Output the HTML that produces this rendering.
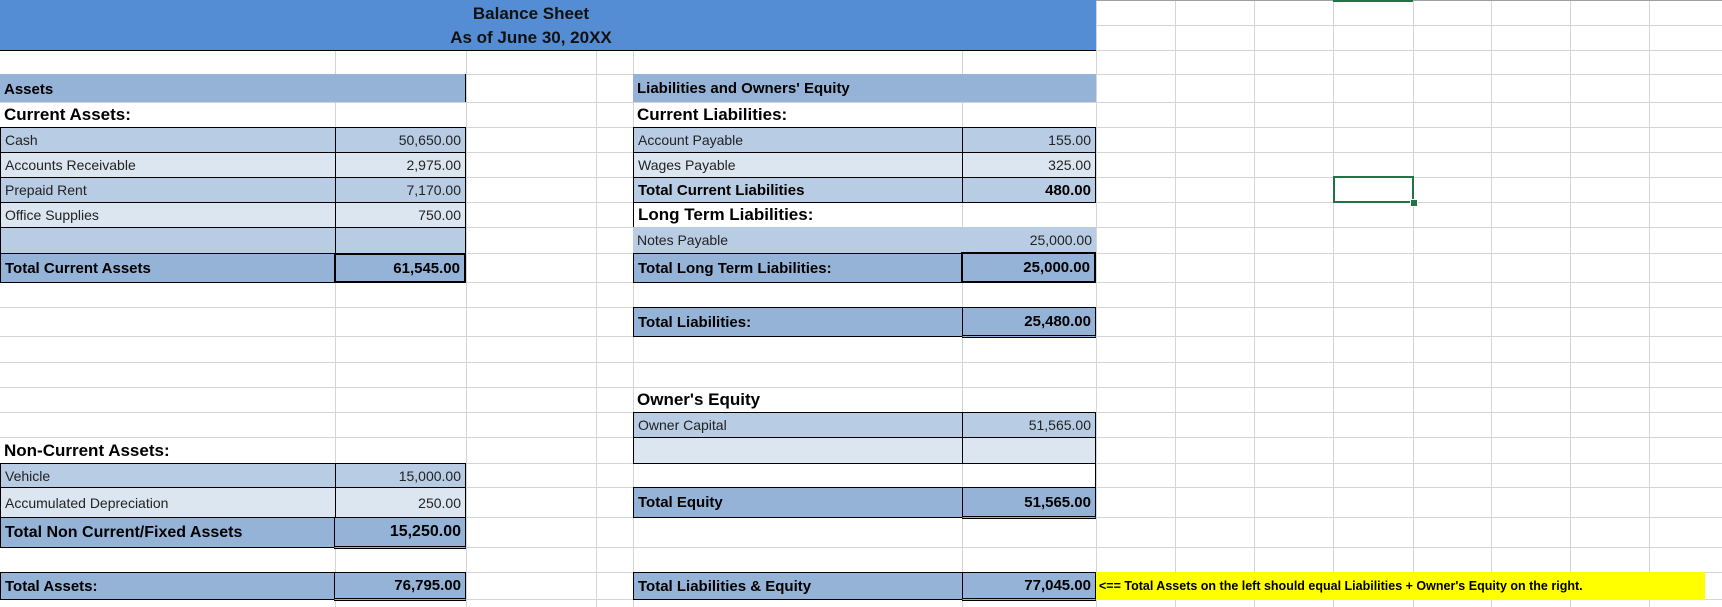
<!DOCTYPE html>
<html><head><meta charset="utf-8"><style>
body{margin:0;width:1722px;height:607px;overflow:hidden;background:#fff;position:relative;font-family:"Liberation Sans",Arial,sans-serif;}
.v{position:absolute;top:0;height:607px;width:1px;background:#d4d4d4}
.h{position:absolute;left:0;width:1722px;height:1px;background:#d4d4d4}
.c{position:absolute;box-sizing:border-box;display:flex;align-items:center;padding:0 4px;font-size:14px;color:#222;white-space:nowrap;overflow:visible}
.r{justify-content:flex-end}
.f1{background:#95b3d7}.f2{background:#b8cce4}.f3{background:#dce6f1}.w{background:#fff}
.b{border:1px solid #000}
.bb{border:2px solid #000}
.db{border:1px solid #000;border-bottom:3px double #000}
.t{font-weight:bold;font-size:15px;color:#000}
.hd{font-weight:bold;font-size:17px;color:#000;align-items:flex-end;padding-bottom:2px}
</style></head><body>
<!-- grid -->
<div class="v" style="left:335px"></div><div class="v" style="left:466px"></div><div class="v" style="left:596px"></div><div class="v" style="left:633px"></div><div class="v" style="left:962px"></div><div class="v" style="left:1096px"></div><div class="v" style="left:1175px"></div><div class="v" style="left:1254px"></div><div class="v" style="left:1333px"></div><div class="v" style="left:1413px"></div><div class="v" style="left:1491px"></div><div class="v" style="left:1570px"></div><div class="v" style="left:1649px"></div>
<div class="h" style="top:25px"></div><div class="h" style="top:50px"></div><div class="h" style="top:74px"></div><div class="h" style="top:102px"></div><div class="h" style="top:127px"></div><div class="h" style="top:152px"></div><div class="h" style="top:177px"></div><div class="h" style="top:202px"></div><div class="h" style="top:227px"></div><div class="h" style="top:253px"></div><div class="h" style="top:282px"></div><div class="h" style="top:307px"></div><div class="h" style="top:336px"></div><div class="h" style="top:362px"></div><div class="h" style="top:387px"></div><div class="h" style="top:412px"></div><div class="h" style="top:437px"></div><div class="h" style="top:463px"></div><div class="h" style="top:487px"></div><div class="h" style="top:517px"></div><div class="h" style="top:547px"></div><div class="h" style="top:572px"></div><div class="h" style="top:599px"></div>
<div style="position:absolute;left:0;top:0;width:1722px;height:1px;background:#a0a0a0"></div>
<!-- header -->
<div style="position:absolute;left:0;top:0;width:1096px;height:51px;background:#548dd4;border-bottom:1px solid #000;box-sizing:border-box"></div>
<div style="position:absolute;left:331px;top:2px;width:400px;text-align:center;font-weight:bold;font-size:17px;line-height:24px;color:#111">Balance Sheet<br>As of June 30, 20XX</div>
<!-- left -->
<div class="c f1 hd" style="left:0;top:74px;width:466px;height:28px;border-right:1px solid #000;font-size:15px;padding-bottom:4px">Assets</div>
<div class="c hd w" style="left:0;top:102px;width:335px;height:25px;background:transparent">Current Assets:</div>
<div class="c f2 b" style="left:0;top:127px;width:336px;height:26px">Cash</div><div class="c f2 b r" style="left:335px;top:127px;width:131px;height:26px">50,650.00</div>
<div class="c f3 b" style="left:0;top:152px;width:336px;height:26px">Accounts Receivable</div><div class="c f3 b r" style="left:335px;top:152px;width:131px;height:26px">2,975.00</div>
<div class="c f2 b" style="left:0;top:177px;width:336px;height:26px">Prepaid Rent</div><div class="c f2 b r" style="left:335px;top:177px;width:131px;height:26px">7,170.00</div>
<div class="c f3 b" style="left:0;top:202px;width:336px;height:26px">Office Supplies</div><div class="c f3 b r" style="left:335px;top:202px;width:131px;height:26px">750.00</div>
<div class="c f2 b" style="left:0;top:227px;width:336px;height:27px"></div><div class="c f2 b" style="left:335px;top:227px;width:131px;height:27px"></div>
<div class="c f1 b t" style="left:0;top:253px;width:336px;height:30px">Total Current Assets</div><div class="c f1 bb t r" style="left:334px;top:253px;width:132px;height:30px">61,545.00</div>
<div class="c hd" style="left:0;top:437px;width:335px;height:26px">Non-Current Assets:</div>
<div class="c f2 b" style="left:0;top:463px;width:336px;height:25px">Vehicle</div><div class="c f2 b r" style="left:335px;top:463px;width:131px;height:25px">15,000.00</div>
<div class="c f3 b" style="left:0;top:487px;width:336px;height:31px">Accumulated Depreciation</div><div class="c f3 b r" style="left:335px;top:487px;width:131px;height:31px">250.00</div>
<div class="c f1 b t" style="left:0;top:517px;width:336px;height:31px;font-size:16px">Total Non Current/Fixed Assets</div><div class="c f1 db t r" style="left:334px;top:517px;width:132px;height:32px;font-size:16px">15,250.00</div>
<div class="c f1 b t" style="left:0;top:572px;width:336px;height:28px">Total Assets:</div><div class="c f1 db t r" style="left:334px;top:572px;width:132px;height:29px">76,795.00</div>
<!-- right -->
<div class="c f1 t" style="left:633px;top:74px;width:463px;height:28px">Liabilities and Owners' Equity</div>
<div class="c hd" style="left:633px;top:102px;width:329px;height:25px">Current Liabilities:</div>
<div class="c f2 b" style="left:633px;top:127px;width:330px;height:26px">Account Payable</div><div class="c f2 b r" style="left:962px;top:127px;width:134px;height:26px">155.00</div>
<div class="c f3 b" style="left:633px;top:152px;width:330px;height:26px">Wages Payable</div><div class="c f3 b r" style="left:962px;top:152px;width:134px;height:26px">325.00</div>
<div class="c f2 b t" style="left:633px;top:177px;width:330px;height:26px">Total Current Liabilities</div><div class="c f2 b t r" style="left:962px;top:177px;width:134px;height:26px">480.00</div>
<div class="c hd" style="left:633px;top:202px;width:329px;height:25px;border-left:1px solid #000">Long Term Liabilities:</div>
<div class="c f2" style="left:633px;top:227px;width:463px;height:26px">Notes Payable</div><div class="c r" style="left:962px;top:227px;width:134px;height:26px">25,000.00</div>
<div class="c f1 b t" style="left:633px;top:253px;width:330px;height:30px">Total Long Term Liabilities:</div><div class="c f1 bb t r" style="left:961px;top:252px;width:135px;height:31px">25,000.00</div>
<div class="c f1 b t" style="left:633px;top:307px;width:330px;height:30px">Total Liabilities:</div><div class="c f1 db t r" style="left:962px;top:307px;width:134px;height:31px">25,480.00</div>
<div class="c hd" style="left:633px;top:387px;width:329px;height:25px">Owner's Equity</div>
<div class="c f2 b" style="left:633px;top:412px;width:330px;height:26px">Owner Capital</div><div class="c f2 b r" style="left:962px;top:412px;width:134px;height:26px">51,565.00</div>
<div class="c f3 b" style="left:633px;top:437px;width:330px;height:27px"></div><div class="c f3 b" style="left:962px;top:437px;width:134px;height:27px"></div>
<div class="c w" style="left:1095px;top:463px;width:1px;height:25px;background:#000;padding:0"></div>
<div class="c f1 b t" style="left:633px;top:487px;width:330px;height:31px">Total Equity</div><div class="c f1 db t r" style="left:962px;top:487px;width:134px;height:32px">51,565.00</div>
<div class="c f1 b t" style="left:633px;top:572px;width:330px;height:28px">Total Liabilities &amp; Equity</div><div class="c f1 db t r" style="left:962px;top:572px;width:134px;height:29px">77,045.00</div>
<div class="c" style="left:1096px;top:572px;width:609px;height:28px;background:#ffff00;font-weight:bold;font-size:12.5px;color:#000;padding-left:3px">&lt;== Total Assets on the left should equal Liabilities + Owner's Equity on the right.</div>
<!-- selected cell -->
<div style="position:absolute;left:1333px;top:176px;width:81px;height:27px;border:2px solid #217346;box-sizing:border-box"></div>
<div style="position:absolute;left:1410px;top:199px;width:6px;height:6px;background:#217346;border:1px solid #fff"></div>
<div style="position:absolute;left:1333px;top:0;width:80px;height:2px;background:#217346"></div>
</body></html>
